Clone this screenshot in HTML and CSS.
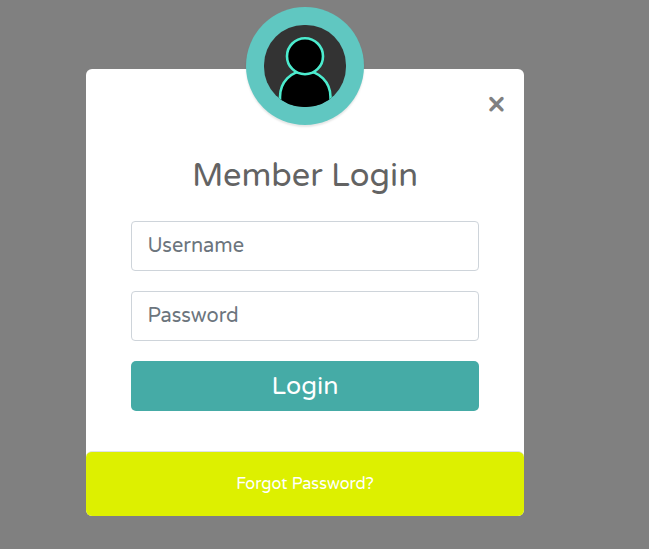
FILE: index.html
```html
<!DOCTYPE html>
<html lang="en">
<head>
  <meta charset="UTF-8" />
  <meta name="viewport" content="width=device-width, initial-scale=1.0">
  <title>Member Login</title>
  <link rel="stylesheet" href="styles.css">
</head>
<body>

  <div class="modal-login">
    <div class="modal-header">
      <div class="avatar">
        <svg viewBox="0 0 82 82" width="82" height="82">
          <rect width="82" height="82" fill="#333" />
          <path d="M16 86V72C16 57 27 46 41 46S66.500 57 66.500 72V86Z" fill="#000" stroke="#4cebce" stroke-width="2.600" />
          <circle cx="41" cy="31.200" r="18" fill="#000" stroke="#4cebce" stroke-width="2.600" />
        </svg>
      </div>
      <h4 class="modal-title">Member Login</h4>
      <button type="button" class="close" aria-label="Close">&times;</button>
    </div>
    <form class="modal-body">
      <input type="text" class="form-control" name="username" placeholder="Username" required>
      <input type="password" class="form-control" name="password" placeholder="Password" required>
      <button type="submit" class="login-btn">Login</button>
    </form>
    <div class="modal-footer">
      <a href="#">Forgot Password?</a>
    </div>
  </div>

</body>
</html>
```
FILE: styles.css
```css
* {
  box-sizing: border-box;
}

body {
  margin: 0;
  padding: 69px 0 0 86px;
  min-height: 549px;
  background: #808080;
  font-family: "Varela Round", "Noto Sans", sans-serif;
}

.modal-login {
  position: relative;
  width: 438px;
  height: 447px;
  display: flex;
  flex-direction: column;
  background: #fff;
  border-radius: 6px;
}

.modal-header {
  height: 152px;
  padding-top: 84px;
}

.avatar {
  position: absolute;
  top: -62px;
  left: 160px;
  width: 118px;
  height: 118px;
  padding: 18px;
  border-radius: 50%;
  background: #60c7c1;
  box-shadow: 0 2px 2px rgba(0, 0, 0, 0.1);
}

.avatar svg {
  display: block;
  border-radius: 40px;
}

.modal-title {
  margin: 0;
  color: #636363;
  font-size: 32.5px;
  font-weight: 400;
  line-height: 46px;
  text-align: center;
}

.close {
  position: absolute;
  top: 14px;
  right: 15.5px;
  width: 24px;
  height: 40px;
  padding: 0;
  border: 0;
  background: none;
  color: #808080;
  font-family: inherit;
  font-size: 30px;
  font-weight: 700;
  line-height: 40px;
  cursor: pointer;
}

.modal-body {
  flex: 1;
  display: flex;
  flex-direction: column;
  gap: 20px;
  padding: 0 45px;
}

.form-control {
  width: 100%;
  height: 50px;
  padding: 6px 15.5px 7px;
  border: 1px solid #ced4da;
  border-radius: 4px;
  color: #495057;
  font-family: inherit;
  font-size: 20px;
}

.form-control::placeholder {
  color: #6c757d;
  opacity: 1;
}

.login-btn {
  height: 50px;
  padding: 0;
  border: 0;
  border-radius: 5px;
  background: #45aba6;
  color: #fff;
  font-family: inherit;
  font-size: 25px;
  line-height: 50px;
  cursor: pointer;
}

.modal-footer {
  height: 65px;
  border-top: 1px solid #dee2e6;
  border-radius: 6px;
  background: #ddf000;
  line-height: 64px;
  text-align: center;
}

.modal-footer a {
  color: #fff;
  font-size: 16.25px;
  text-decoration: none;
}
```
